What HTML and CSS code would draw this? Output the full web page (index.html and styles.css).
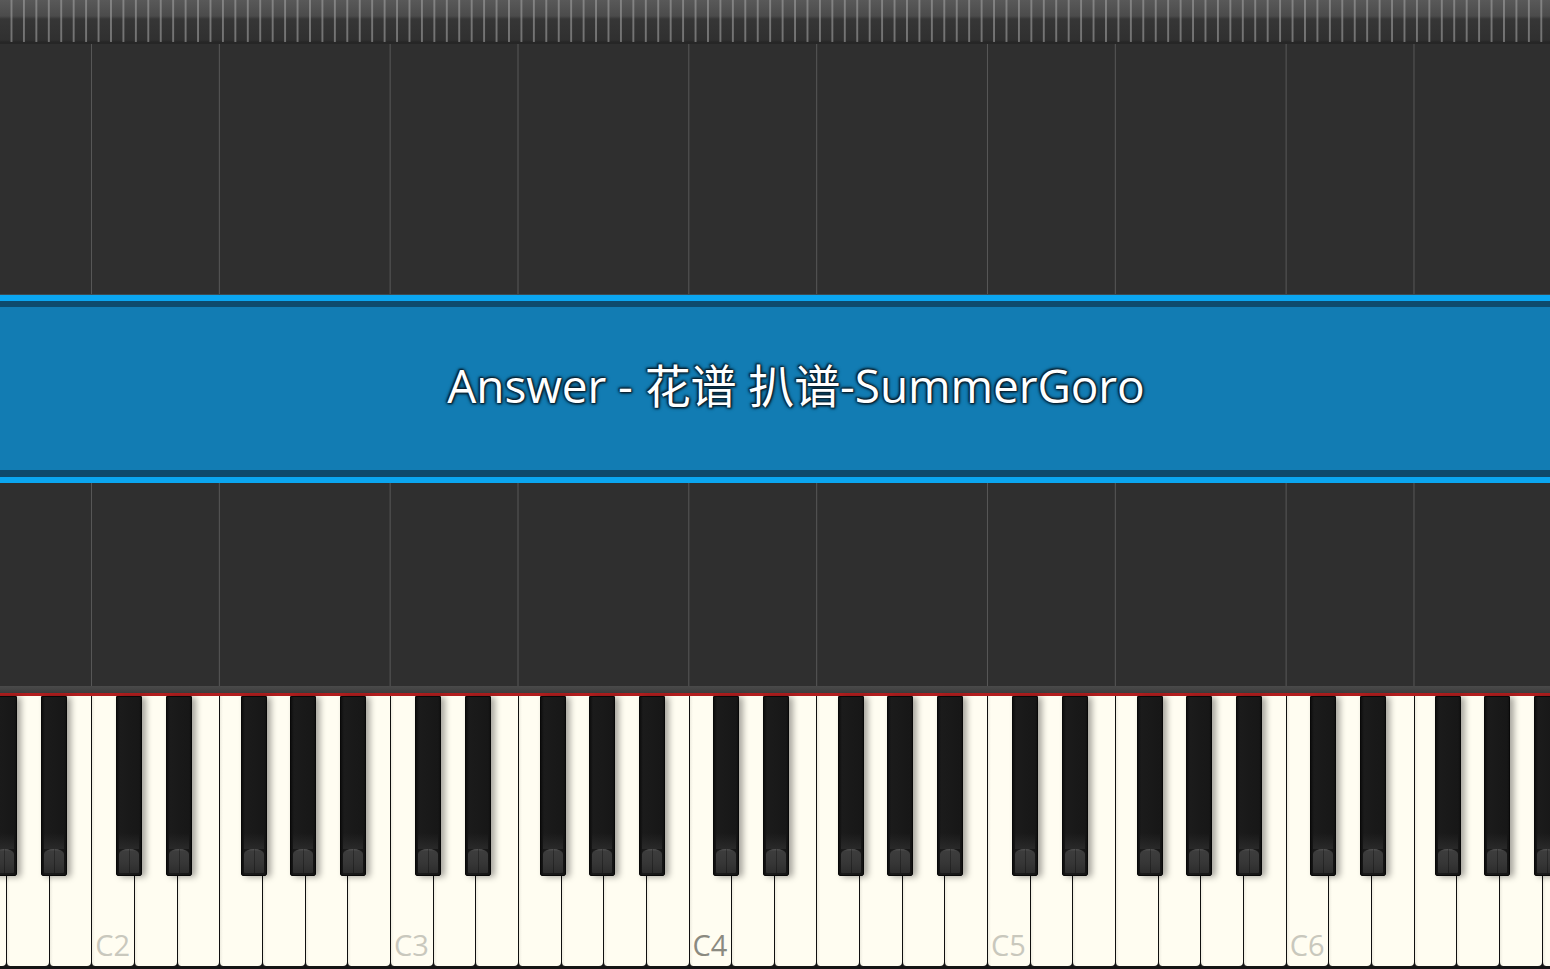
FILE: index.html
```html
<!DOCTYPE html>
<html lang="zh-CN">
<head>
<meta charset="utf-8">
<title>Answer - 花谱 扒谱-SummerGoro</title>
<link rel="stylesheet" href="styles.css">
</head>
<body>
<div class="app">
  <div class="ruler"></div>
  <div class="roll">
    <div class="band">
      <div class="title">Answer - 花谱 扒谱-SummerGoro</div>
    </div>
  </div>
  <div class="piano">
    <div class="piano-bar"></div>
    <div class="piano-red"></div>
    <div class="keys">
      <div class="wk g"><div class="bk"></div></div>
      <div class="wk a"><div class="bk"></div></div>
      <div class="wk"></div>

      <div class="wk c"><div class="bk"></div><span class="lbl">C2</span></div>
      <div class="wk d"><div class="bk"></div></div>
      <div class="wk"></div>
      <div class="wk f"><div class="bk"></div></div>
      <div class="wk g"><div class="bk"></div></div>
      <div class="wk a"><div class="bk"></div></div>
      <div class="wk"></div>

      <div class="wk c"><div class="bk"></div><span class="lbl">C3</span></div>
      <div class="wk d"><div class="bk"></div></div>
      <div class="wk"></div>
      <div class="wk f"><div class="bk"></div></div>
      <div class="wk g"><div class="bk"></div></div>
      <div class="wk a"><div class="bk"></div></div>
      <div class="wk"></div>

      <div class="wk c"><div class="bk"></div><span class="lbl mid">C4</span></div>
      <div class="wk d"><div class="bk"></div></div>
      <div class="wk"></div>
      <div class="wk f"><div class="bk"></div></div>
      <div class="wk g"><div class="bk"></div></div>
      <div class="wk a"><div class="bk"></div></div>
      <div class="wk"></div>

      <div class="wk c"><div class="bk"></div><span class="lbl">C5</span></div>
      <div class="wk d"><div class="bk"></div></div>
      <div class="wk"></div>
      <div class="wk f"><div class="bk"></div></div>
      <div class="wk g"><div class="bk"></div></div>
      <div class="wk a"><div class="bk"></div></div>
      <div class="wk"></div>

      <div class="wk c"><div class="bk"></div><span class="lbl">C6</span></div>
      <div class="wk d"><div class="bk"></div></div>
      <div class="wk"></div>
      <div class="wk f"><div class="bk"></div></div>
      <div class="wk g"><div class="bk"></div></div>
      <div class="wk a"><div class="bk"></div></div>
      <div class="wk"></div>
    </div>
  </div>
</div>
</body>
</html>
```
FILE: styles.css
```css
html, body {
  margin: 0;
  padding: 0;
  background: #2f2f2f;
}

.app {
  width: 1550px;
  height: 969px;
  overflow: hidden;
  display: flex;
  flex-direction: column;
  background: #2f2f2f;
  font-family: "Open Sans", "Noto Sans CJK SC", sans-serif;
}

/* top ruler */
.ruler {
  flex: 0 0 44px;
  background:
    linear-gradient(90deg, transparent 0 11px, rgba(160,160,160,0.6) 11px 12px, transparent 12px),
    linear-gradient(180deg, #595959 0, #4b4b4b 16px, #363636 19px, #303030 40px, #262626 42px, #2a2a2a 44px);
  background-size: 12.444px 42px, 100% 100%;
  background-repeat: repeat-x, no-repeat;
  box-shadow: inset 0 -2px 0 #262626;
}

/* piano roll area */
.roll {
  flex: 0 0 642px;
  padding-top: 251px;
  box-sizing: border-box;
  background-color: #2f2f2f;
  background-image: linear-gradient(90deg,
    #575757 0 1px, transparent 1px 128px,
    #575757 128px 129px, transparent 129px);
  background-size: 298.667px 100%;
  background-position: 91px 0;
  background-repeat: repeat-x;
}

.band {
  height: 188px;
  box-sizing: border-box;
  border-top: 6px solid #0ba6f0;
  border-bottom: 6px solid #0ba6f0;
  background: #127cb3;
  box-shadow: inset 0 6px 0 #0e4a6c, inset 0 -7px 0 #0e4a6c, 0 -1px 0 #3b4b52;
  display: flex;
  align-items: center;
  justify-content: center;
}

.title {
  color: #ffffff;
  font-size: 46px;
  line-height: 1;
  margin-top: -8px;
  margin-left: 42px;
  letter-spacing: -0.1px;
  text-shadow:
    0 0 2px #08202f,
    0 0 3px #08202f,
    0 0 4px #08202f,
    1px 1px 2px #08202f,
    -1px -1px 2px #08202f;
}

/* piano */
.piano {
  flex: 0 0 283px;
  display: flex;
  flex-direction: column;
  background: #151515;
}

.piano-bar {
  flex: 0 0 7px;
  background: linear-gradient(180deg, #4a4a4a, #3d3d3d);
}

.piano-red {
  flex: 0 0 3px;
  background: #b21e1e;
  box-shadow: 0 1px 0 #6a1212;
}

.keys {
  flex: 0 0 273px;
  display: flex;
  margin-left: -36.667px;
}

.wk {
  position: relative;
  flex: 0 0 calc(298.667px / 7);
  height: 270px;
  box-sizing: border-box;
  background: linear-gradient(90deg, #efede1 0, #fffdf1 3px, #fffdf1 100%);
  border-left: 1.6px solid #101010;
  border-radius: 0 0 4px 4px;
}

.bk {
  position: absolute;
  z-index: 2;
  top: 0;
  width: 26px;
  height: 180px;
  box-sizing: border-box;
  background: linear-gradient(90deg, #0e0e0e 0, #1b1b1b 3px, #171717 22px, #0c0c0c 26px);
  border: 1px solid #080808;
  border-radius: 0 0 2px 2px;
  box-shadow: 4px 1px 6px rgba(0, 0, 0, 0.35);
}

.bk::after {
  content: "";
  position: absolute;
  left: 2px;
  right: 2px;
  bottom: 2px;
  height: 24px;
  border-radius: 50% 50% 1px 1px / 5px 5px 1px 1px;
  background:
    linear-gradient(90deg, transparent 0 10.5px, rgba(0,0,0,0.3) 10.5px 11.5px, transparent 11.5px),
    linear-gradient(180deg, #5a5a5a 0, #3d3d3d 2px, #363636 60%, #2c2c2c 100%);
}

.bk::before {
  content: "";
  position: absolute;
  left: 2px;
  right: 2px;
  bottom: 26px;
  height: 16px;
  background: linear-gradient(180deg, rgba(42,42,42,0) 0, rgba(42,42,42,0.95) 100%);
}

.c .bk { left: 23.7px; }
.d .bk { left: 31px; }
.f .bk { left: 20.7px; }
.g .bk { left: 27px; }
.a .bk { left: 34.4px; }

.lbl {
  position: absolute;
  left: 3px;
  bottom: 7px;
  font-family: "Open Sans", sans-serif;
  font-size: 29px;
  line-height: 1;
  color: #c9c8bd;
}

.lbl.mid {
  color: #8b8a80;
}
```
